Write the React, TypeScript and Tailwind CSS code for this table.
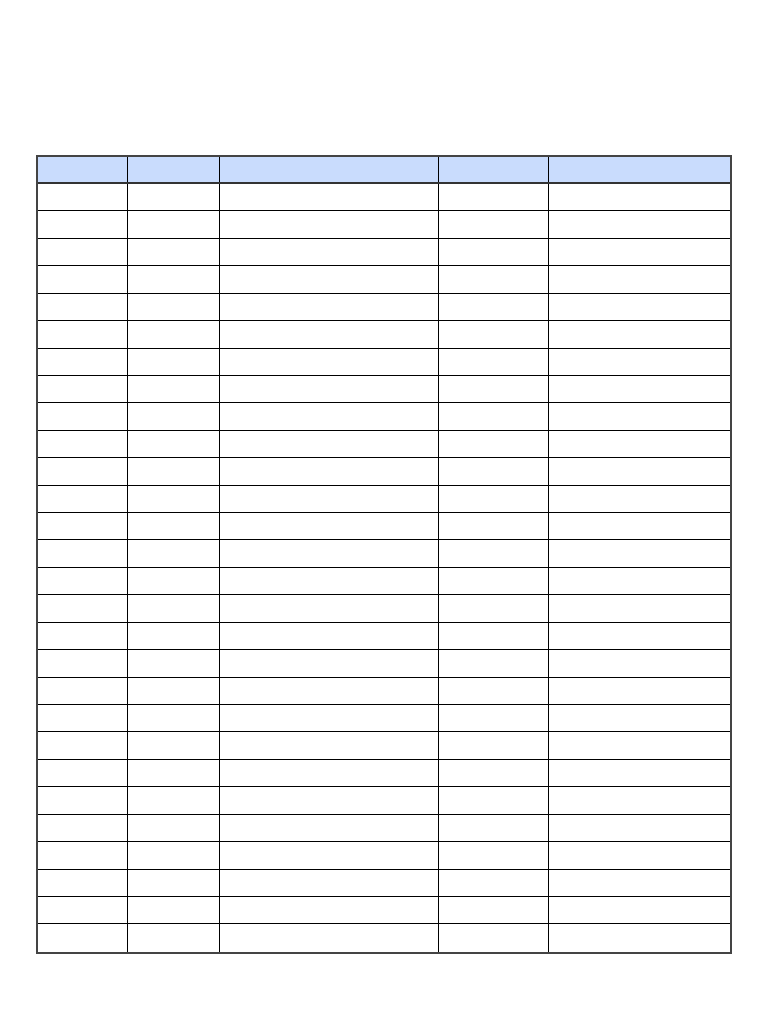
import React from "react";

const widths = [90, 92, 219, 110, 181];

export default function App() {
  const rows = Array.from({ length: 28 });
  return (
    <div className="w-[768px] h-[1024px] bg-white pt-[155px] pl-[36px]" style={{ fontFamily: "'Liberation Sans', sans-serif" }}>
      <div className="w-[696px] border-2 border-[#444]">
        <div className="flex h-[27px] bg-[#c9dcfd] border-b-2 border-[#333]">
          {widths.map((w, i) => (
            <div key={i} className={`h-full ${i < 4 ? "border-r border-black" : ""}`} style={{ width: w }} />
          ))}
        </div>
        {rows.map((_, r) => (
          <div key={r} className={`flex h-[27.43px] ${r < 27 ? "border-b border-black" : ""}`}>
            {widths.map((w, i) => (
              <div key={i} className={`h-full ${i < 4 ? "border-r border-black" : ""}`} style={{ width: w }} />
            ))}
          </div>
        ))}
      </div>
    </div>
  );
}
